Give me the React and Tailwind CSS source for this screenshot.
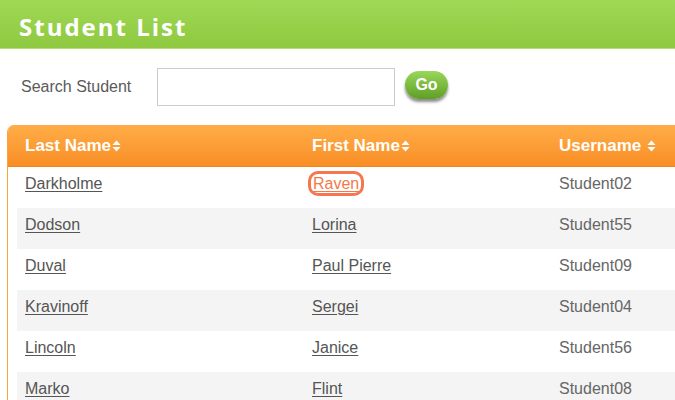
import React from "react";

const ROWS = [
  { last: "Darkholme", first: "Raven", user: "Student02", active: true },
  { last: "Dodson", first: "Lorina", user: "Student55" },
  { last: "Duval", first: "Paul Pierre", user: "Student09" },
  { last: "Kravinoff", first: "Sergei", user: "Student04" },
  { last: "Lincoln", first: "Janice", user: "Student56" },
  { last: "Marko", first: "Flint", user: "Student08" },
];

function SortIcon() {
  return (
    <svg width="9" height="12" viewBox="0 0 9 12" className="inline-block ml-[1px]">
      <path d="M4.5 0.5 L8.5 5 H0.5 Z" fill="#fff" />
      <path d="M0.5 7 H8.5 L4.5 11.5 Z" fill="#fff" />
    </svg>
  );
}

export default function App() {
  return (
    <div className="w-[675px] h-[400px] overflow-hidden bg-white" style={{ fontFamily: '"Liberation Sans", Arial, sans-serif' }}>
      <div className="h-[49px] bg-gradient-to-b from-[#a0d955] to-[#8ec940] border-b border-[#b4e07c] flex items-center pl-[19px] pt-[6px]">
        <h1
          className="text-white font-bold text-[24px] tracking-[2px] leading-none"
          style={{ fontFamily: '"Open Sans", "DejaVu Sans", sans-serif' }}
        >
          Student List
        </h1>
      </div>

      <div className="flex items-center h-[76px] pl-[21px]">
        <label className="text-[16px] text-[#5a5a5a] w-[136px]">Search Student</label>
        <input type="text" className="w-[238px] h-[38px] border border-[#cccccc] bg-white outline-none" />
        <button className="ml-[10px] mt-[-4px] w-[43px] h-[28px] rounded-full bg-gradient-to-b from-[#9ad75a] to-[#5e9f24] text-white font-bold text-[16px] leading-none shadow-[0_3px_3px_rgba(0,0,0,0.45)]">
          Go
        </button>
      </div>

      <div className="ml-[7px] border-l border-[#f9a443] rounded-tl-[7px] overflow-hidden">
        <div className="h-[42px] bg-gradient-to-b from-[#ffad47] to-[#f98e24] border-b border-[#f08520] pl-[9px] grid grid-cols-[287px_247px_1fr] items-center text-white font-bold text-[17px]">
          <div className="pl-[8px]">Last Name<SortIcon /></div>
          <div className="pl-[8px]">First Name<SortIcon /></div>
          <div className="pl-[8px]">Username <SortIcon /></div>
        </div>
        <div className="pl-[9px]">
          {ROWS.map((r, i) => (
            <div
              key={r.user}
              className={
                "h-[41px] grid grid-cols-[287px_247px_1fr] items-start pt-[8px] text-[16px] leading-[18px] " +
                (i % 2 === 1 ? "bg-[#f4f4f4]" : "bg-white")
              }
            >
              <div className="pl-[8px]">
                <a href="#" className="text-[#555] underline underline-offset-2">{r.last}</a>
              </div>
              <div className="pl-[8px]">
                {r.active ? (
                  <a href="#" className="text-[#f27a4a] underline underline-offset-2 -ml-[4px] px-[2px] py-[1px] border-[3px] border-[#f5764f] rounded-[10px]">
                    {r.first}
                  </a>
                ) : (
                  <a href="#" className="text-[#555] underline underline-offset-2">{r.first}</a>
                )}
              </div>
              <div className="pl-[8px] text-[#666]">{r.user}</div>
            </div>
          ))}
        </div>
      </div>
    </div>
  );
}
